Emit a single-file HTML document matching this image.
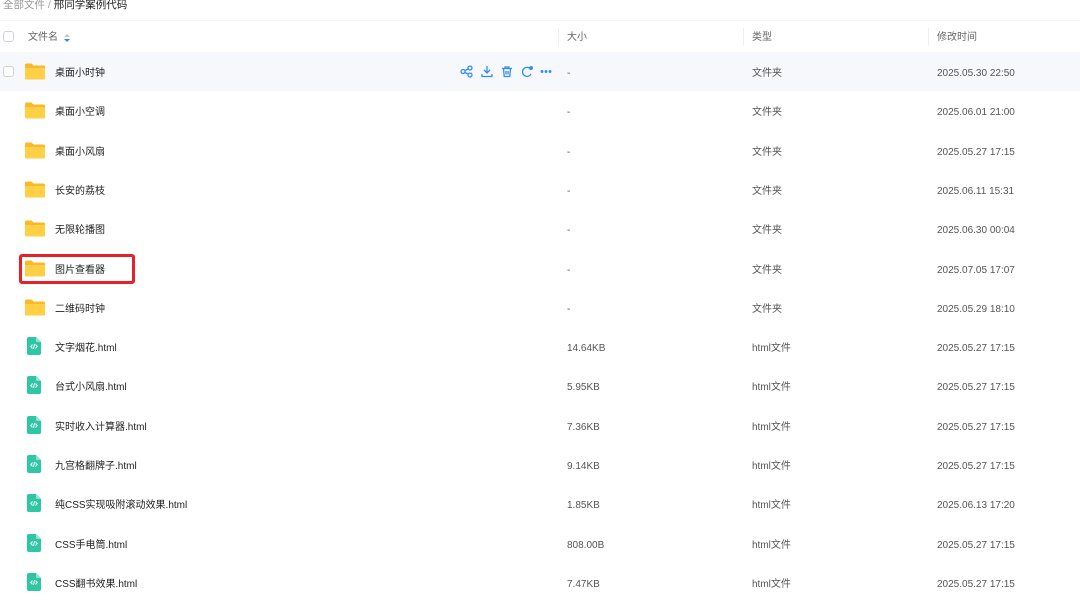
<!DOCTYPE html>
<html><head><meta charset="utf-8"><style>
*{margin:0;padding:0;box-sizing:border-box}
body{width:1080px;height:609px;overflow:hidden;background:#fff;font-family:"Liberation Sans","Noto Sans CJK SC",sans-serif;font-size:10px;color:#333;position:relative}
.bc{position:absolute;left:3px;top:-2px;font-size:10.5px;line-height:14px;color:#999}
.bc b{font-weight:normal;color:#222}
.hd{position:absolute;left:0;top:20px;width:1080px;height:32px;border-top:1px solid #f2f3f5;color:#666}
.hd span{position:absolute;top:1px;line-height:31px}
.sep{position:absolute;top:7px;width:1px;height:18px;background:#eceef2}
.row{position:absolute;left:0;width:1080px;height:39px}
.row span{position:absolute;top:2px;line-height:39px;white-space:nowrap}
.n{left:55px;color:#222}
.s{left:567px;color:#555}
.t{left:752px;color:#555}
.m{left:937px;color:#555}
.cb{position:absolute;width:11px;height:11px;border:1px solid #d0d3d9;border-radius:3px;background:#fff}
.fd{position:absolute;left:25px;top:11px;width:20px;height:17px}
.hi{position:absolute;left:27px;top:10px;width:14px;height:18px}
.red{position:absolute;left:19px;top:254px;width:116px;height:30px;border:3px solid #e8202a;border-radius:3px}
</style></head><body>
<div class="bc">全部文件 / <b>邢同学案例代码</b></div>
<div class="hd">
<div class="cb" style="left:3px;top:10px"></div>
<span style="left:28px">文件名</span>
<svg style="position:absolute;left:64px;top:13px" width="6" height="8"><path d="M3 0L6 3H0z" fill="#c0c4cc"/><path d="M3 8L6 5H0z" fill="#1e90ff"/></svg>
<div class="sep" style="left:558px"></div><span style="left:567px">大小</span>
<div class="sep" style="left:743px"></div><span style="left:752px">类型</span>
<div class="sep" style="left:928px"></div><span style="left:937px">修改时间</span>
</div>
<div id="rows"></div>
<div class="red"></div>
<script>
var d=[["桌面小时钟","-","文件夹","2025.05.30 22:50",0],["桌面小空调","-","文件夹","2025.06.01 21:00",0],["桌面小风扇","-","文件夹","2025.05.27 17:15",0],["长安的荔枝","-","文件夹","2025.06.11 15:31",0],["无限轮播图","-","文件夹","2025.06.30 00:04",0],["图片查看器","-","文件夹","2025.07.05 17:07",0],["二维码时钟","-","文件夹","2025.05.29 18:10",0],["文字烟花.html","14.64KB","html文件","2025.05.27 17:15",1],["台式小风扇.html","5.95KB","html文件","2025.05.27 17:15",1],["实时收入计算器.html","7.36KB","html文件","2025.05.27 17:15",1],["九宫格翻牌子.html","9.14KB","html文件","2025.05.27 17:15",1],["纯CSS实现吸附滚动效果.html","1.85KB","html文件","2025.06.13 17:20",1],["CSS手电筒.html","808.00B","html文件","2025.05.27 17:15",1],["CSS翻书效果.html","7.47KB","html文件","2025.05.27 17:15",1]];
var h="";
d.forEach(function(r,i){var top=52+i*39.3;
var ic=r[4]?'<svg class="hi" viewBox="0 0 14 18"><path d="M2 0h7l5 5v11a2 2 0 0 1-2 2H2a2 2 0 0 1-2-2V2a2 2 0 0 1 2-2z" fill="#2ec7a3"/><path d="M9 0v4a1 1 0 0 0 1 1h4z" fill="#8ee3cf"/><path d="M5.5 7.5L3.8 9.5l1.7 2M8.5 7.5l1.7 2-1.7 2M7.6 7l-1.2 5" stroke="#fff" stroke-width="1" fill="none"/></svg>':'<svg class="fd" viewBox="0 0 20 17"><path d="M0 2a1.5 1.5 0 0 1 1.5-1.5h5l2 2H18.5A1.5 1.5 0 0 1 20 4v11a1.5 1.5 0 0 1-1.5 1.5h-17A1.5 1.5 0 0 1 0 15z" fill="#f9b929"/><path d="M0 5h20v10a1.5 1.5 0 0 1-1.5 1.5h-17A1.5 1.5 0 0 1 0 15z" fill="#ffcf45"/></svg>';
var extra="",bg="";
if(i==0){bg="background:#f7f8fb;";extra='<div class="cb" style="left:3px;top:14px"></div><svg style="position:absolute;left:460px;top:13px" width="95" height="13" fill="none" stroke="#2f8df5" stroke-width="1.3"><circle cx="3" cy="6.5" r="2"/><circle cx="10" cy="3" r="2"/><circle cx="10" cy="10" r="2"/><path d="M5 5.5L8 4M5 7.5L8 9"/><path d="M27 1v7M24 5l3 3 3-3M22 9v2.5h10V9"/><path d="M42 3.5h10M45 3.5V2h4v1.5M43.5 3.5l.7 8h5.6l.7-8M46 6v3.5M48 6v3.5"/><path d="M70 3.5A4.5 4.5 0 1 0 71 9"/><circle cx="71" cy="3" r="1.3" fill="#2f8df5"/><circle cx="82" cy="6.5" r=".8" fill="#2f8df5"/><circle cx="86" cy="6.5" r=".8" fill="#2f8df5"/><circle cx="90" cy="6.5" r=".8" fill="#2f8df5"/></svg>';}
h+='<div class="row" style="'+bg+'top:'+top+'px">'+extra+ic+'<span class="n">'+r[0]+'</span><span class="s">'+r[1]+'</span><span class="t">'+r[2]+'</span><span class="m">'+r[3]+'</span></div>';});
document.getElementById("rows").innerHTML=h;
</script>
</body></html>
